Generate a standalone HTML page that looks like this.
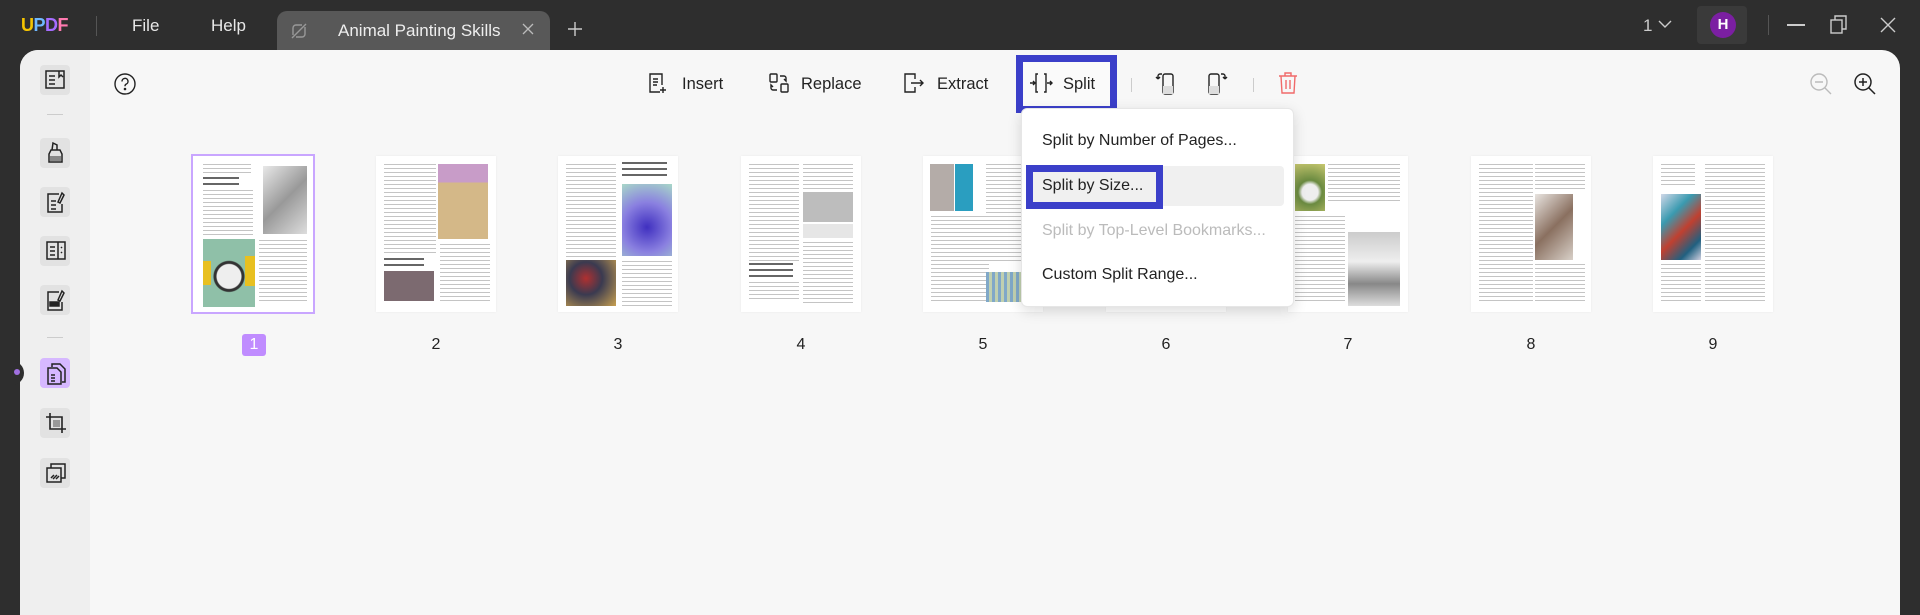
<!DOCTYPE html>
<html><head><meta charset="utf-8"><style>
*{margin:0;padding:0;box-sizing:border-box}
body{width:1920px;height:615px;background:#2e2e2e;font-family:"Liberation Sans",sans-serif;position:relative;overflow:hidden;color:#222}
.a{position:absolute}
.tb{color:#e8e8e8;font-size:17px}
.main{left:20px;top:50px;width:1880px;height:565px;background:#f7f7f7;border-radius:18px 18px 0 0;overflow:hidden}
.side{left:0;top:0;width:70px;height:565px;background:#efefef}
.sb{left:20px;width:30px;height:30px;background:#e2e2e2;border-radius:4px}
.tool{font-size:16.5px;color:#222;top:25px}
.pg{width:120px;height:156px;top:106px;background:#fff;box-shadow:0 0 2px rgba(0,0,0,.06)}
.t{position:absolute;background:repeating-linear-gradient(#c4c4c4 0 1px,transparent 1px 4px)}
.h{position:absolute;background:repeating-linear-gradient(#666 0 2px,transparent 2px 6px)}
.i{position:absolute}
.num{top:286px;width:120px;text-align:center;font-size:16px;color:#222}
.mi{left:20px;font-size:16px;color:#222}
</style></head><body>
<div class="a" style="left:21px;top:15px;font-weight:bold;font-size:18px;letter-spacing:-0.5px"><span style="color:#f5c400">U</span><span style="color:#6fb8ff">P</span><span style="color:#a56cff">D</span><span style="color:#ff7ab0">F</span></div>
<div class="a" style="left:96px;top:16px;width:1px;height:20px;background:#555"></div>
<div class="a tb" style="left:132px;top:16px">File</div>
<div class="a tb" style="left:211px;top:16px">Help</div>
<div class="a" style="left:277px;top:11px;width:273px;height:39px;background:#585858;border-radius:10px 10px 0 0"></div>
<svg class="a" style="left:289px;top:21px" width="20" height="20" viewBox="0 0 20 20" fill="none" stroke="#999" stroke-width="1.4"><path d="M4 14V7a3 3 0 0 1 3-3h6M16 6v7a3 3 0 0 1-3 3H7M3 17L17 3"/></svg>
<div class="a tb" style="left:338px;top:21px;color:#eee">Animal Painting Skills</div>
<svg class="a" style="left:522px;top:23px" width="12" height="12" stroke="#bbb" stroke-width="1.3"><path d="M1 1l10 10M11 1L1 11"/></svg>
<svg class="a" style="left:567px;top:21px" width="16" height="16" stroke="#ccc" stroke-width="1.4"><path d="M8 1v14M1 8h14"/></svg>
<div class="a tb" style="left:1643px;top:16px;color:#ccc">1</div>
<svg class="a" style="left:1658px;top:20px" width="14" height="10"><path d="M1 1l6 6 6-6" stroke="#ccc" stroke-width="1.4" fill="none"/></svg>
<div class="a" style="left:1697px;top:6px;width:50px;height:38px;background:#3a3a3a;border-radius:4px"></div>
<div class="a" style="left:1710px;top:12px;width:26px;height:26px;border-radius:50%;background:#7b1fa2;color:#fff;font-size:15px;font-weight:bold;text-align:center;line-height:26px">H</div>
<div class="a" style="left:1768px;top:15px;width:1px;height:20px;background:#555"></div>
<div class="a" style="left:1787px;top:24px;width:18px;height:1.5px;background:#ccc"></div>
<svg class="a" style="left:1830px;top:15px" width="18" height="20" fill="none" stroke="#ccc" stroke-width="1.4"><rect x="1" y="5" width="11" height="13"/><path d="M5 5V1h11v13h-4"/></svg>
<svg class="a" style="left:1880px;top:17px" width="16" height="16" stroke="#ccc" stroke-width="1.4"><path d="M1 1l14 14M15 1L1 15"/></svg>

<div class="a main">
 <div class="a side"></div>
 <div class="a sb" style="top:15px"></div>
 <div class="a" style="left:27px;top:64px;width:16px;height:1px;background:#ccc"></div>
 <div class="a sb" style="top:88px"></div>
 <div class="a sb" style="top:137px"></div>
 <div class="a sb" style="top:186px"></div>
 <div class="a sb" style="top:235px"></div>
 <div class="a" style="left:27px;top:287px;width:16px;height:1px;background:#ccc"></div>
 <div class="a sb" style="top:308px;background:#d6b8ff"></div>
 <div class="a sb" style="top:358px"></div>
 <div class="a sb" style="top:408px"></div>
 <svg class="a" style="left:24px;top:19px" width="22" height="22" fill="none" stroke="#222" stroke-width="1.5"><rect x="2" y="2" width="18" height="17"/><path d="M5 7h6M5 11h6M5 15h6M15 2v6l2-2 2 2"/></svg>
 <svg class="a" style="left:25px;top:91px" width="20" height="24" fill="none" stroke="#222" stroke-width="1.5"><path d="M8 2l4 2v5H7zM6 9h9l2 4v8H4v-8z"/><rect x="5" y="15" width="11" height="5" fill="#888" stroke="none"/></svg>
 <svg class="a" style="left:25px;top:140px" width="22" height="24" fill="none" stroke="#222" stroke-width="1.5"><path d="M14 4H3v18h14v-8M6 11h5M6 15h5M6 19h5M17 3l2 2-4 8-2-1z"/></svg>
 <svg class="a" style="left:25px;top:190px" width="22" height="22" fill="none" stroke="#222" stroke-width="1.5"><rect x="2" y="2" width="18" height="17"/><path d="M13 2v17M5 7h5M5 11h5M5 15h5M16 7l1 1M16 13l1-1"/></svg>
 <svg class="a" style="left:25px;top:238px" width="22" height="24" fill="none" stroke="#222" stroke-width="1.5"><path d="M14 4H3v18h14v-8M17 3l2 2-4 8-2-1z"/><rect x="5" y="14" width="9" height="4" fill="#222"/></svg>
 <svg class="a" style="left:25px;top:312px" width="22" height="24" fill="none" stroke="#222" stroke-width="1.5"><path d="M7 5V2h8l5 5v13h-3M3 6h9l4 4v12H3zM6 13h4M6 16h4M6 19h4"/></svg>
 <svg class="a" style="left:25px;top:362px" width="22" height="22" fill="none" stroke="#222" stroke-width="1.6"><path d="M5 1v16h16M1 5h16v16"/><rect x="8" y="8" width="7" height="7" fill="#999" stroke="none"/></svg>
 <svg class="a" style="left:25px;top:412px" width="22" height="22" fill="none" stroke="#222" stroke-width="1.5"><rect x="6" y="2" width="14" height="14"/><rect x="2" y="6" width="14" height="14" fill="#e2e2e2"/><path d="M6 16l3-3M8 17l4-4M11 17l3-3"/></svg>

 <svg class="a" style="left:94px;top:23px" width="22" height="22" fill="none" stroke="#222" stroke-width="1.4"><circle cx="11" cy="11" r="10"/><path d="M8 8.5a3 3 0 1 1 4 2.7c-.8.4-1 1-1 2"/><circle cx="11" cy="16" r=".6" fill="#222"/></svg>

 <svg class="a" style="left:628px;top:22px" width="20" height="22" fill="none" stroke="#222" stroke-width="1.4"><path d="M12 20H2V2h12v11M5 7h5M5 10h5M5 13h4M15 15v6M12 18h6"/></svg>
 <div class="a tool" style="left:662px">Insert</div>
 <svg class="a" style="left:748px;top:22px" width="22" height="22" fill="none" stroke="#222" stroke-width="1.4"><rect x="2" y="2" width="7" height="8" rx="1"/><rect x="13" y="12" width="7" height="8" rx="1"/><path d="M12 4h4a2 2 0 0 1 2 2v3l-2-2M9 18H5a2 2 0 0 1-2-2v-3l2 2"/></svg>
 <div class="a tool" style="left:781px">Replace</div>
 <svg class="a" style="left:883px;top:22px" width="22" height="22" fill="none" stroke="#222" stroke-width="1.4"><path d="M12 7V2H2v18h10v-5M8 11h12M17 8l3 3-3 3"/></svg>
 <div class="a tool" style="left:917px">Extract</div>
 <div class="a" style="left:996px;top:5px;width:101px;height:58px;border:7px solid #3b3fc9;background:#fafafa"></div>
 <svg class="a" style="left:1009px;top:22px" width="24" height="22" fill="none" stroke="#222" stroke-width="1.4"><path d="M9 2H7v18h2M15 2h2v18h-2M1 11h5M4 9l2 2-2 2M18 11h5M21 9l2 2-2 2"/></svg>
 <div class="a tool" style="left:1043px">Split</div>
 <div class="a" style="left:1111px;top:28px;width:1px;height:14px;background:#ccc"></div>
 <svg class="a" style="left:1135px;top:20px" width="24" height="26" fill="none" stroke="#222" stroke-width="1.4"><rect x="8" y="4" width="10" height="20" rx="2"/><path d="M3 9V6a2 2 0 0 1 2-2h2M3 9l-2-2M3 9l2-2"/><rect x="8" y="16" width="10" height="8" fill="#ddd" stroke="none"/></svg>
 <svg class="a" style="left:1186px;top:20px" width="24" height="26" fill="none" stroke="#222" stroke-width="1.4"><rect x="3" y="4" width="10" height="20" rx="2"/><path d="M19 9V6a2 2 0 0 0-2-2h-2M19 9l-2-2M19 9l2-2"/><rect x="3" y="16" width="10" height="8" fill="#ddd" stroke="none"/></svg>
 <div class="a" style="left:1233px;top:28px;width:1px;height:14px;background:#ccc"></div>
 <svg class="a" style="left:1258px;top:21px" width="20" height="24" fill="none" stroke="#f06a6a" stroke-width="1.4"><path d="M1 5h18M7 5V2h6v3M3 5l1 17h12l1-17M8 9v9M12 9v9"/></svg>
 <svg class="a" style="left:1789px;top:22px" width="24" height="24" fill="none" stroke="#bbb" stroke-width="1.4"><circle cx="10" cy="10" r="8"/><path d="M6 10h8M16 16l6 6"/></svg>
 <svg class="a" style="left:1833px;top:22px" width="24" height="24" fill="none" stroke="#222" stroke-width="1.5"><circle cx="10" cy="10" r="8"/><path d="M6 10h8M10 6v8M16 16l6 6"/></svg>

 <div class="a pg" style="left:173px;outline:2px solid #c9a6ff;outline-offset:0">
  <div class="t" style="left:10px;top:8px;width:48px;height:10px"></div>
  <div class="h" style="left:10px;top:21px;width:36px;height:10px"></div>
  <div class="t" style="left:10px;top:34px;width:50px;height:45px"></div>
  <div class="i" style="left:70px;top:10px;width:44px;height:68px;background:linear-gradient(135deg,#e8e8e8,#999 50%,#ddd)"></div>
  <div class="i" style="left:10px;top:83px;width:52px;height:68px;background:radial-gradient(circle at 50% 55%,#eee 0 12px,#333 13px 15px,#8fc0a8 16px),#8fc0a8"></div>
  <div class="i" style="left:10px;top:105px;width:8px;height:24px;background:#e8c020"></div>
  <div class="i" style="left:52px;top:100px;width:10px;height:30px;background:#e8c020"></div>
  <div class="t" style="left:66px;top:84px;width:48px;height:62px"></div>
 </div>
 <div class="a pg" style="left:356px">
  <div class="t" style="left:8px;top:8px;width:52px;height:90px"></div>
  <div class="i" style="left:62px;top:8px;width:50px;height:75px;background:linear-gradient(#c89cc8 0 25%,#d4b888 25%)"></div>
  <div class="h" style="left:8px;top:102px;width:40px;height:10px"></div>
  <div class="i" style="left:8px;top:115px;width:50px;height:30px;background:#7c6a70"></div>
  <div class="t" style="left:64px;top:88px;width:50px;height:58px"></div>
 </div>
 <div class="a pg" style="left:538px">
  <div class="t" style="left:8px;top:8px;width:50px;height:100px"></div>
  <div class="h" style="left:64px;top:6px;width:45px;height:14px"></div>
  <div class="i" style="left:64px;top:28px;width:50px;height:72px;background:radial-gradient(circle at 50% 60%,#4030c0,#8a80e0 50%,#a8d8c8)"></div>
  <div class="i" style="left:8px;top:104px;width:50px;height:46px;background:radial-gradient(circle at 40% 40%,#b03030,#3a3a50 40%,#c8a050)"></div>
  <div class="t" style="left:64px;top:105px;width:50px;height:45px"></div>
 </div>
 <div class="a pg" style="left:721px">
  <div class="t" style="left:8px;top:8px;width:50px;height:100px"></div>
  <div class="t" style="left:62px;top:8px;width:50px;height:26px"></div>
  <div class="i" style="left:62px;top:36px;width:50px;height:30px;background:#bdbdbd"></div>
  <div class="i" style="left:62px;top:68px;width:50px;height:14px;background:#e6e6e6"></div>
  <div class="t" style="left:62px;top:86px;width:50px;height:62px"></div>
  <div class="h" style="left:8px;top:107px;width:44px;height:14px"></div>
  <div class="t" style="left:8px;top:126px;width:50px;height:20px"></div>
 </div>
 <div class="a pg" style="left:903px">
  <div class="i" style="left:7px;top:8px;width:24px;height:47px;background:#b4aca8"></div>
  <div class="i" style="left:32px;top:8px;width:18px;height:47px;background:#2a9ec0"></div>
  <div class="t" style="left:8px;top:60px;width:58px;height:88px"></div>
  <div class="t" style="left:63px;top:8px;width:52px;height:100px"></div>
  <div class="i" style="left:63px;top:116px;width:52px;height:30px;background:repeating-linear-gradient(90deg,#80a8c8 0 3px,#c0d0b0 3px 6px)"></div>
 </div>
 <div class="a pg" style="left:1086px"></div>
 <div class="a pg" style="left:1268px">
  <div class="i" style="left:7px;top:8px;width:30px;height:47px;background:radial-gradient(circle at 50% 60%,#eee 0 8px,#6a8a40 12px,#c8c870)"></div>
  <div class="t" style="left:40px;top:8px;width:72px;height:40px"></div>
  <div class="t" style="left:7px;top:60px;width:50px;height:88px"></div>
  <div class="i" style="left:60px;top:76px;width:52px;height:74px;background:linear-gradient(#ccc,#eee 40%,#888 70%,#ddd)"></div>
 </div>
 <div class="a pg" style="left:1451px">
  <div class="t" style="left:8px;top:8px;width:54px;height:140px"></div>
  <div class="t" style="left:64px;top:8px;width:50px;height:28px"></div>
  <div class="i" style="left:64px;top:38px;width:38px;height:66px;background:linear-gradient(135deg,#e8e4e0,#8a7060 50%,#d8d0c8)"></div>
  <div class="t" style="left:64px;top:108px;width:50px;height:40px"></div>
 </div>
 <div class="a pg" style="left:1633px">
  <div class="t" style="left:8px;top:8px;width:34px;height:22px"></div>
  <div class="i" style="left:8px;top:38px;width:40px;height:66px;background:linear-gradient(135deg,#d0d8e8,#3a9ab0 30%,#c04030 55%,#206080 80%,#d0d0e0)"></div>
  <div class="t" style="left:8px;top:108px;width:40px;height:40px"></div>
  <div class="t" style="left:52px;top:8px;width:60px;height:140px"></div>
 </div>
 <div class="a" style="left:222px;top:284px;width:24px;height:22px;background:#c08cff;border-radius:3px;color:#fff;font-size:16px;text-align:center;line-height:22px">1</div>
 <div class="a num" style="left:356px">2</div>
 <div class="a num" style="left:538px">3</div>
 <div class="a num" style="left:721px">4</div>
 <div class="a num" style="left:903px">5</div>
 <div class="a num" style="left:1086px">6</div>
 <div class="a num" style="left:1268px">7</div>
 <div class="a num" style="left:1451px">8</div>
 <div class="a num" style="left:1633px">9</div>

 <div class="a" style="left:1001px;top:58px;width:273px;height:199px;background:#fff;border-radius:6px;box-shadow:0 4px 14px rgba(0,0,0,.14);border:1px solid #e6e6e6">
  <div class="a mi" style="top:23px">Split by Number of Pages...</div>
  <div class="a" style="left:5px;top:57px;width:257px;height:40px;background:#f0f0f0;border-radius:4px"></div>
  <div class="a" style="left:4px;top:56px;width:137px;height:44px;border:7px solid #3b3fc9;background:#f0f0f0"></div>
  <div class="a mi" style="top:68px">Split by Size...</div>
  <div class="a mi" style="top:113px;color:#bbb">Split by Top-Level Bookmarks...</div>
  <div class="a mi" style="top:157px">Custom Split Range...</div>
 </div>
</div>
<div class="a" style="left:10px;top:361px;width:14px;height:24px;background:#2e2e2e;border-radius:0 12px 12px 0"></div>
<div class="a" style="left:14px;top:369px;width:6px;height:6px;border-radius:50%;background:#a070e0"></div>
</body></html>
